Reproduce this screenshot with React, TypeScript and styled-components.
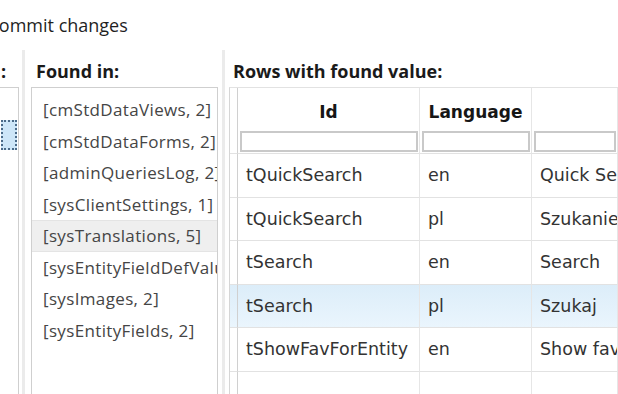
import styled, { createGlobalStyle } from "styled-components";

// Dane do list
const tables = [
  "[cmStdDataViews, 2]",
  "[cmStdDataForms, 2]",
  "[adminQueriesLog, 2]",
  "[sysClientSettings, 1]",
  "[sysTranslations, 5]",
  "[sysEntityFieldDefValues, 1]",
  "[sysImages, 2]",
  "[sysEntityFields, 2]"
];

const rows = [
  { id: "tQuickSearch", lang: "en", value: "Quick Search" },
  { id: "tQuickSearch", lang: "pl", value: "Szukanie" },
  { id: "tSearch", lang: "en", value: "Search" },
  { id: "tSearch", lang: "pl", value: "Szukaj" },
  { id: "tShowFavForEntity", lang: "en", value: "Show favourites" }
];

const selectedTable = 4;
const selectedRow = 3;

const GlobalStyle = createGlobalStyle`
  html, body {
    margin: 0;
    padding: 0;
    background: #ffffff;
    overflow: hidden;
  }
`;

const App: React.FC = () => {
  return (
    <>
      <GlobalStyle />
      <Page>
        <TitleBar>
          <Title>Commit changes</Title>
        </TitleBar>
        <Main>
          <Panel>
            <PanelLabel>:</PanelLabel>
            <LeftListBox>
              <FocusItem />
            </LeftListBox>
          </Panel>
          <Splitter />
          <Panel>
            <PanelLabel $indent={11}>Found in:</PanelLabel>
            <ListBox>
              {tables.map((t, i) => (
                <ListItem key={t} $selected={i === selectedTable}>
                  {t}
                </ListItem>
              ))}
            </ListBox>
          </Panel>
          <Splitter />
          <Panel>
            <PanelLabel $indent={8}>Rows with found value:</PanelLabel>
            <Grid>
              <HeaderCell $corner />
              <HeaderCell>Id</HeaderCell>
              <HeaderCell>Language</HeaderCell>
              <HeaderCell />

              <FilterCell $corner />
              <FilterCell><FilterBox /></FilterCell>
              <FilterCell><FilterBox /></FilterCell>
              <FilterCell><FilterBox /></FilterCell>

              {rows.map((r, i) => (
                <Row key={i} $selected={i === selectedRow}>
                  <RowHead />
                  <Cell>{r.id}</Cell>
                  <Cell>{r.lang}</Cell>
                  <Cell>{r.value}</Cell>
                </Row>
              ))}
              <Row $selected={false}>
                <RowHead />
                <Cell />
                <Cell />
                <Cell />
              </Row>
            </Grid>
          </Panel>
        </Main>
      </Page>
    </>
  );
};

const Page = styled.div`
  width: 618px;
  height: 394px;
  overflow: hidden;
  font-family: "Open Sans", "Noto Sans", sans-serif;
`;

const TitleBar = styled.div`
  height: 50px;
  display: flex;
  align-items: center;
  box-sizing: border-box;
`;

const Title = styled.span`
  margin-left: -12.5px;
  font-size: 18px;
  color: #1f1f1f;
`;

const Main = styled.div`
  display: grid;
  grid-template-columns: 22px 3px 197px 3px 1fr;
  height: 344px;
`;

const Panel = styled.div`
  display: flex;
  flex-direction: column;
  min-width: 0;
  overflow: hidden;
`;

const Splitter = styled.div`
  background: #ebebeb;
`;

const PanelLabel = styled.div<{ $indent?: number }>`
  height: 37px;
  padding-top: 5px;
  box-sizing: border-box;
  line-height: 32px;
  padding-left: ${p => p.$indent ?? 1}px;
  font-size: 18px;
  font-weight: 700;
  color: #1a1a1a;
  white-space: nowrap;
`;

const LeftListBox = styled.div`
  flex: 1;
  margin-left: -4px;
  margin-right: 3px;
  border: 1px solid #cfcfcf;
  border-bottom: none;
  padding-top: 32px;
  padding-left: 3px;
`;

const FocusItem = styled.div`
  width: 16px;
  height: 30px;
  box-sizing: border-box;
  margin-left: 1px;
  background: #cde6f8;
  border: 2px dotted #4a6a88;
`;

const ListBox = styled.div`
  flex: 1;
  margin-left: 6px;
  margin-right: 4px;
  border: 1px solid #cfcfcf;
  border-bottom: none;
  padding-top: 6px;
  overflow: hidden;
`;

const ListItem = styled.div<{ $selected: boolean }>`
  height: 31.5px;
  line-height: 30px;
  padding-left: 11px;
  font-size: 17px;
  letter-spacing: 0.35px;
  color: #454545;
  white-space: nowrap;
  background: ${p => (p.$selected ? "#efefef" : "transparent")};
  border-top: 1px solid ${p => (p.$selected ? "#e4e4e4" : "transparent")};
  border-bottom: 1px solid ${p => (p.$selected ? "#e4e4e4" : "transparent")};
  box-sizing: border-box;
`;

const Grid = styled.div`
  flex: 1;
  margin-left: 4px;
  display: grid;
  grid-template-columns: 8px 182px 112px 1fr;
  grid-template-rows: 42px 24px repeat(6, 43.5px);
  border-left: 1px solid #d6d6d6;
  border-top: 1px solid #e2e2e2;
  font-family: "DejaVu Sans", Verdana, sans-serif;
`;

const HeaderCell = styled.div<{ $corner?: boolean }>`
  display: flex;
  align-items: center;
  justify-content: center;
  padding-top: 5px;
  font-size: 17px;
  font-weight: 700;
  color: #161616;
  border-right: 1px solid ${p => (p.$corner ? "#d0d0d0" : "#e6e6e6")};
  white-space: nowrap;
`;

const FilterCell = styled.div<{ $corner?: boolean }>`
  display: flex;
  align-items: stretch;
  padding: 1px 1px 1px 2px;
  border-right: 1px solid ${p => (p.$corner ? "#d0d0d0" : "#e6e6e6")};
  border-bottom: 1px solid #e2e2e2;
`;

const FilterBox = styled.div`
  flex: 1;
  background: #ffffff;
  border: 2px solid #c9c9c9;
`;

const Row = styled.div<{ $selected: boolean }>`
  display: contents;

  & > div {
    background: ${p =>
      p.$selected ? "linear-gradient(#dcedf9, #eaf5fd)" : "#ffffff"};
    border-bottom: 1px solid #e2e2e2;
  }
`;

const RowHead = styled.div`
  border-right: 1px solid #d0d0d0;
`;

const Cell = styled.div`
  display: flex;
  align-items: center;
  padding-left: 8px;
  font-size: 17.5px;
  color: #333333;
  white-space: nowrap;
  overflow: hidden;
  border-right: 1px solid #e6e6e6;
`;

export default App;
